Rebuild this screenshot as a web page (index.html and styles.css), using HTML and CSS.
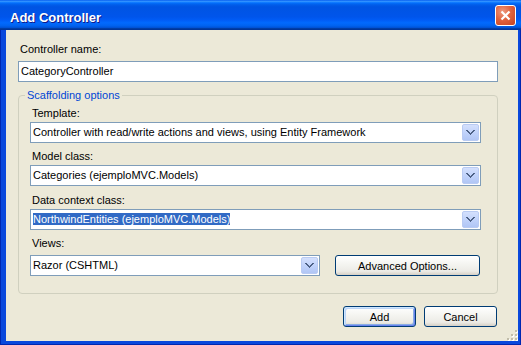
FILE: index.html
```html
<!DOCTYPE html>
<html lang="en">
<head>
  <meta charset="UTF-8" />
  <title>Add Controller</title>
  <link rel="stylesheet" href="styles.css">
</head>
<body>
  <div class="window">
    <div class="titlebar">
      <span class="title">Add Controller</span>
      <button class="close" aria-label="Close">
        <svg width="13" height="13" viewBox="0 0 13 13"><path d="M2.5 2.5 L10.5 10.5 M10.5 2.5 L2.5 10.5" stroke="#fff" stroke-width="2.2" fill="none"/></svg>
      </button>
    </div>

    <div class="client">
      <div class="field-label first">Controller name:</div>
      <div class="textbox">CategoryController</div>

      <fieldset class="group">
        <legend>Scaffolding options</legend>
        <div class="group-body">
          <div class="field-label first">Template:</div>
          <div class="combo">
            <span class="value">Controller with read/write actions and views, using Entity Framework</span>
            <span class="drop"><svg width="9" height="5" viewBox="0 0 9 5"><g fill="#4d6185"><rect x="0" y="0" width="2" height="1"/><rect x="7" y="0" width="2" height="1"/><rect x="1" y="1" width="2" height="1"/><rect x="6" y="1" width="2" height="1"/><rect x="2" y="2" width="2" height="1"/><rect x="5" y="2" width="2" height="1"/><rect x="3" y="3" width="3" height="1"/><rect x="4" y="4" width="1" height="1"/></g></svg></span>
          </div>

          <div class="field-label">Model class:</div>
          <div class="combo">
            <span class="value">Categories (ejemploMVC.Models)</span>
            <span class="drop"><svg width="9" height="5" viewBox="0 0 9 5"><g fill="#4d6185"><rect x="0" y="0" width="2" height="1"/><rect x="7" y="0" width="2" height="1"/><rect x="1" y="1" width="2" height="1"/><rect x="6" y="1" width="2" height="1"/><rect x="2" y="2" width="2" height="1"/><rect x="5" y="2" width="2" height="1"/><rect x="3" y="3" width="3" height="1"/><rect x="4" y="4" width="1" height="1"/></g></svg></span>
          </div>

          <div class="field-label wide">Data context class:</div>
          <div class="combo">
            <span class="value"><span class="selected">NorthwindEntities (ejemploMVC.Models)</span></span>
            <span class="drop"><svg width="9" height="5" viewBox="0 0 9 5"><g fill="#4d6185"><rect x="0" y="0" width="2" height="1"/><rect x="7" y="0" width="2" height="1"/><rect x="1" y="1" width="2" height="1"/><rect x="6" y="1" width="2" height="1"/><rect x="2" y="2" width="2" height="1"/><rect x="5" y="2" width="2" height="1"/><rect x="3" y="3" width="3" height="1"/><rect x="4" y="4" width="1" height="1"/></g></svg></span>
          </div>

          <div class="field-label">Views:</div>
          <div class="views-row">
            <div class="combo short">
              <span class="value">Razor (CSHTML)</span>
              <span class="drop"><svg width="9" height="5" viewBox="0 0 9 5"><g fill="#4d6185"><rect x="0" y="0" width="2" height="1"/><rect x="7" y="0" width="2" height="1"/><rect x="1" y="1" width="2" height="1"/><rect x="6" y="1" width="2" height="1"/><rect x="2" y="2" width="2" height="1"/><rect x="5" y="2" width="2" height="1"/><rect x="3" y="3" width="3" height="1"/><rect x="4" y="4" width="1" height="1"/></g></svg></span>
            </div>
            <button class="btn adv">Advanced Options...</button>
          </div>
        </div>
      </fieldset>

      <div class="actions">
        <button class="btn default">Add</button>
        <button class="btn">Cancel</button>
      </div>

      <span class="grip">
        <svg width="12" height="12" viewBox="0 0 12 12">
          <g fill="#fff"><rect x="10" y="2" width="2" height="2"/><rect x="10" y="6" width="2" height="2"/><rect x="6" y="6" width="2" height="2"/><rect x="10" y="10" width="2" height="2"/><rect x="6" y="10" width="2" height="2"/><rect x="2" y="10" width="2" height="2"/></g>
          <g fill="#c1bdaa"><rect x="9" y="1" width="2" height="2"/><rect x="9" y="5" width="2" height="2"/><rect x="5" y="5" width="2" height="2"/><rect x="9" y="9" width="2" height="2"/><rect x="5" y="9" width="2" height="2"/><rect x="1" y="9" width="2" height="2"/></g>
        </svg>
      </span>
    </div>
  </div>
</body>
</html>
```

FILE: styles.css
```css
html, body {
  margin: 0;
  padding: 0;
  background: #fff;
  font-family: "Liberation Sans", Arial, sans-serif;
  font-size: 11px;
  color: #000;
}

.window {
  width: 521px;
  height: 345px;
  display: flex;
  flex-direction: column;
  background: #0a48dc;
  box-shadow: inset 1px 0 #0027b0, inset -1px 0 #0027b0, inset 0 -1px #0027b0;
}

/* title bar, luna blue */
.titlebar {
  height: 30px;
  flex: none;
  display: flex;
  align-items: flex-start;
  background: linear-gradient(to bottom,
    #0058ee 0%, #3593ff 4%, #288eff 6%, #127dff 8%, #036ffc 10%,
    #0262ee 14%, #0057e5 20%, #0054e3 24%, #0055eb 56%, #005bf5 66%,
    #026afe 76%, #0062ef 86%, #0052d6 92%, #0040ab 94%, #003092 100%);
}

.title {
  padding: 10px 0 0 10px;
  line-height: 15px;
  font-size: 13px;
  font-weight: bold;
  color: #fff;
  text-shadow: 1px 1px #0f1a8a;
}

.close {
  margin: 5px 5px 0 auto;
  width: 21px;
  height: 21px;
  padding: 0;
  border: 1px solid #fff;
  border-radius: 3px;
  background: radial-gradient(circle at 35% 30%, #ee9a80 0%, #e0633f 45%, #c6421f 100%);
  display: flex;
  align-items: center;
  justify-content: center;
}

.client {
  flex: 1;
  position: relative;
  margin: 0 3px 4px 6px;
  padding: 13px 20px 0 12px;
  background: #ece9d8;
}

.field-label {
  line-height: 13px;
  padding-left: 2px;
  margin-top: 7px;
}
.field-label.first { margin-top: 0; }
.field-label.wide { margin-top: 8px; }

.textbox {
  margin-top: 5px;
  height: 21px;
  box-sizing: border-box;
  border: 1px solid #7f9db9;
  background: #fff;
  padding-left: 2px;
  line-height: 19px;
}

.group {
  margin: 7px 0 0;
  padding: 0;
  min-width: 0;
  border: 1px solid #d0d0bf;
  border-radius: 4px;
}

.group legend {
  margin-left: 6px;
  padding: 0 2px;
  line-height: 13px;
  color: #0046d5;
}

.group-body {
  padding: 5px 16px 17px 11px;
}

.combo {
  display: flex;
  margin-top: 2px;
  height: 21px;
  box-sizing: border-box;
  padding: 1px;
  border: 1px solid #7f9db9;
  background: #fff;
}

.combo .value {
  flex: 1;
  padding-left: 1px;
  line-height: 17px;
  white-space: nowrap;
  overflow: hidden;
}

.selected {
  background: #316ac5;
  color: #fff;
}

.drop {
  width: 17px;
  height: 17px;
  box-sizing: border-box;
  border: 1px solid #b9cbf3;
  border-radius: 2px;
  background: linear-gradient(to bottom, #d4e0fd, #c1d3fb 50%, #b1c6f5);
  display: flex;
  align-items: center;
  justify-content: center;
}

.views-row {
  display: flex;
  gap: 15px;
  margin-top: 5px;
}
.combo.short {
  width: 290px;
  margin-top: 0;
}

.btn {
  height: 21px;
  padding: 0;
  border: 1px solid #003c74;
  border-radius: 3px;
  background: linear-gradient(to bottom, #fff 0%, #f4f4f0 45%, #ecebe6 80%, #d6d0c5 100%);
  font-family: "Liberation Sans", Arial, sans-serif;
  font-size: 11px;
  color: #000;
}
.btn.adv { width: 145px; }

.btn.default {
  box-shadow: inset 1px 1px #cee7ff, inset -1px -1px #6982ee, inset 2px 2px #bcd4f6, inset -2px -2px #89ade4;
}

.actions {
  display: flex;
  justify-content: flex-end;
  gap: 8px;
  margin-top: 12px;
  padding-right: 1px;
}
.actions .btn { width: 73px; }

.grip {
  position: absolute;
  right: 0;
  bottom: 0;
  width: 12px;
  height: 12px;
}
.grip svg { display: block; }
```
